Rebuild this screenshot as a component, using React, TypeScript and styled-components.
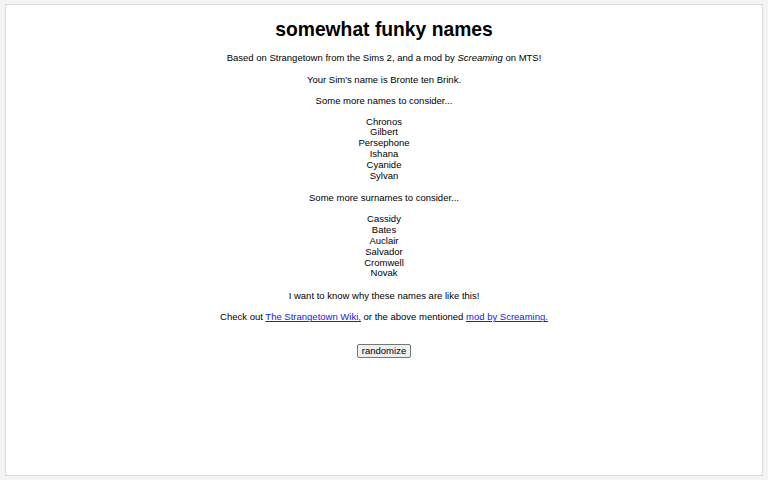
import React from "react";
import styled, { createGlobalStyle } from "styled-components";

const Global = createGlobalStyle`
  html, body {
    margin: 0;
    padding: 0;
    background: #f3f3f3;
  }
  body {
    font-family: "Liberation Sans", Arial, sans-serif;
    color: #000;
  }
`;

const Card = styled.main`
  box-sizing: border-box;
  margin: 4px 5px 0 5px;
  height: 472px;
  background: #fff;
  border: 1px solid #dcdcdc;
  text-align: center;
  font-size: 9.5px;
  padding-top: 13px;
`;

const Title = styled.h1`
  font-size: 19.3px;
  font-weight: bold;
  margin: 0 0 11px 0;
  line-height: 23px;
`;

const Para = styled.p`
  margin: 0 0 10.5px 0;
  line-height: 11px;
`;

const NameList = styled.div`
  margin: 0 0 10.5px 0;
  line-height: 10.9px;
`;

const Link = styled.a`
  color: #1a1ae0;
  text-decoration: underline;
`;

const Action = styled.div`
  margin-top: 21.5px;
`;

const Button = styled.button`
  font-family: "Liberation Sans", Arial, sans-serif;
  font-size: 9.5px;
  line-height: 12px;
  padding: 0 4px;
  background: #efefef;
  border: 1px solid #767676;
  border-radius: 2px;
  color: #000;
`;

const firstNames = ["Chronos", "Gilbert", "Persephone", "Ishana", "Cyanide", "Sylvan"];
const surnames = ["Cassidy", "Bates", "Auclair", "Salvador", "Cromwell", "Novak"];

export default function App() {
  return (
    <>
      <Global />
      <Card>
        <Title>somewhat funky names</Title>
        <Para>
          Based on Strangetown from the Sims 2, and a mod by <em>Screaming</em> on MTS!
        </Para>
        <Para>Your Sim's name is Bronte ten Brink.</Para>
        <Para>Some more names to consider...</Para>
        <NameList>
          {firstNames.map((n) => (
            <div key={n}>{n}</div>
          ))}
        </NameList>
        <Para>Some more surnames to consider...</Para>
        <NameList>
          {surnames.map((n) => (
            <div key={n}>{n}</div>
          ))}
        </NameList>
        <Para>I want to know why these names are like this!</Para>
        <Para>
          Check out <Link href="#">The Strangetown Wiki,</Link> or the above mentioned{" "}
          <Link href="#">mod by Screaming.</Link>
        </Para>
        <Action>
          <Button type="button">randomize</Button>
        </Action>
      </Card>
    </>
  );
}
